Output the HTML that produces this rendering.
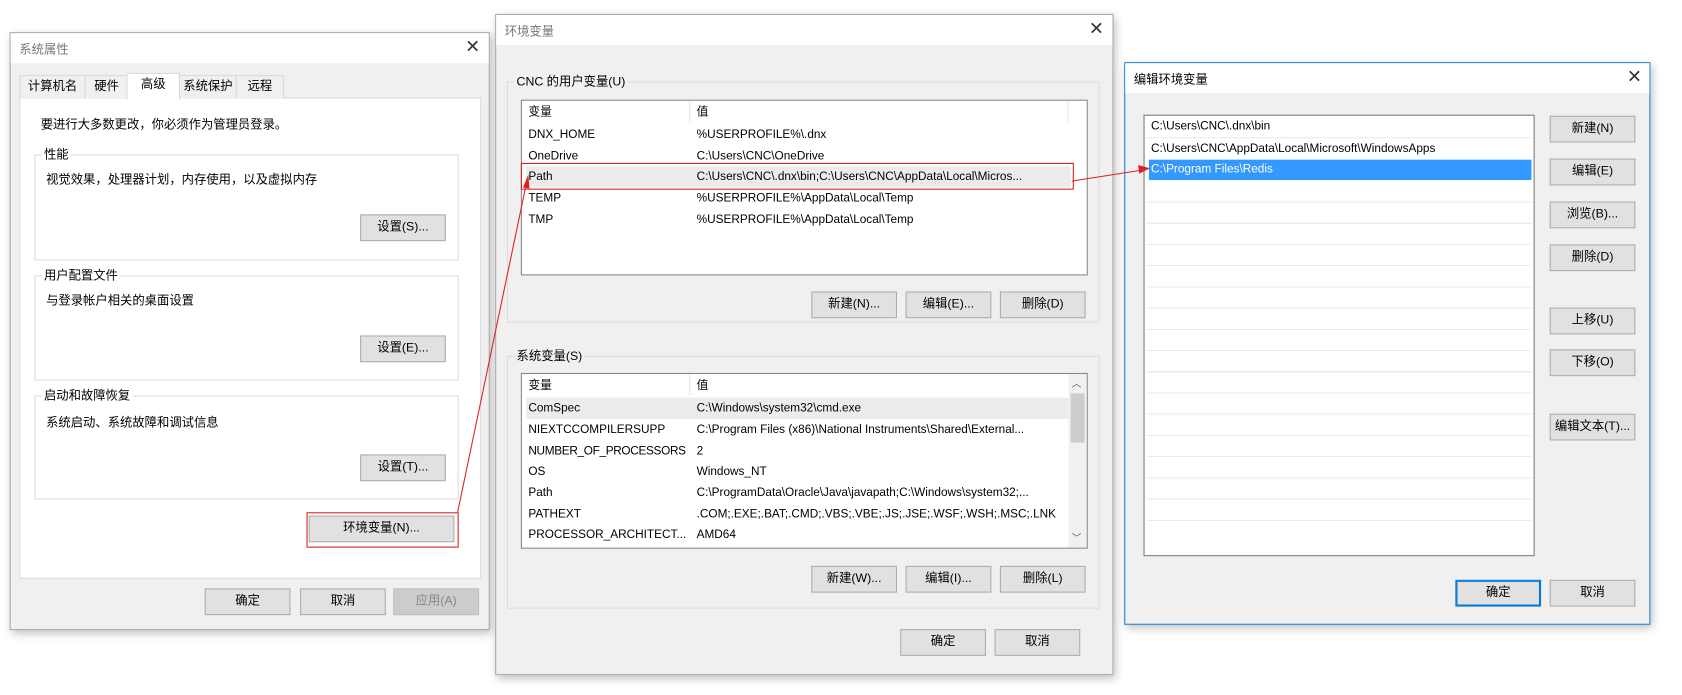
<!DOCTYPE html>
<html><head><meta charset="utf-8"><style>
html,body{margin:0;padding:0;background:#fff;width:1682px;height:695px;overflow:hidden}
#w{position:absolute;left:0;top:0;width:1560px;height:645px;transform:scale(1.0717);transform-origin:0 0;font-family:"Liberation Sans","Noto Sans CJK SC",sans-serif;font-size:11.5px;color:#000}
.a{position:absolute;white-space:nowrap}
.dlg{position:absolute;background:#f0f0f0;border:1px solid #aaa;box-shadow:2px 3px 8px rgba(0,0,0,.25)}
.tb{position:absolute;left:0;right:0;top:0;height:28px;background:#fff}
.tt{position:absolute;left:8px;top:7px;color:#777}
.x{position:absolute;top:3px;font-size:17px;color:#333;font-weight:300}
.btn{position:absolute;height:23px;width:78px;background:#e1e1e1;border:1px solid #adadad;text-align:center;line-height:23px;box-sizing:content-box}
.grp{position:absolute;border:1px solid #dcdcdc}
.gl{position:absolute;top:-9px;left:6px;background:#f0f0f0;padding:0 2px}
.lst{position:absolute;background:#fff;border:1px solid #828790;overflow:hidden}
.r{position:absolute;left:6px;height:20px;line-height:20px}
.lst .r{font-size:11px}
</style></head><body><div id="w">

<!-- dialog 1 -->
<div class="dlg" style="left:9px;top:30px;width:446px;height:556px">
 <div class="tb"><div class="tt">系统属性</div><div class="x" style="left:424px">✕</div></div>
 <div class="a" style="left:8px;top:60px;width:429px;height:447px;background:#fff;border:1px solid #d9d9d9"></div>
 <div class="a" style="left:8px;top:39px;width:60px;height:21px;border:1px solid #d9d9d9;border-bottom:none;background:#f0f0f0;line-height:20px;text-align:center">计算机名</div>
 <div class="a" style="left:69px;top:39px;width:39px;height:21px;border:1px solid #d9d9d9;border-bottom:none;background:#f0f0f0;line-height:20px;text-align:center">硬件</div>
 <div class="a" style="left:108px;top:37px;width:48px;height:24px;border:1px solid #d9d9d9;border-bottom:none;background:#fff;line-height:20px;text-align:center">高级</div>
 <div class="a" style="left:157px;top:39px;width:52px;height:21px;border:1px solid #d9d9d9;border-bottom:none;background:#f0f0f0;line-height:20px;text-align:center">系统保护</div>
 <div class="a" style="left:210px;top:39px;width:43px;height:21px;border:1px solid #d9d9d9;border-bottom:none;background:#f0f0f0;line-height:20px;text-align:center">远程</div>
 <div class="a" style="left:28px;top:77px">要进行大多数更改，你必须作为管理员登录。</div>
 <div class="grp" style="left:22px;top:113px;width:394px;height:97px"><div class="gl" style="background:#fff">性能</div></div>
 <div class="a" style="left:33px;top:128px">视觉效果，处理器计划，内存使用，以及虚拟内存</div>
 <div class="btn" style="left:326px;top:169px">设置(S)...</div>
 <div class="grp" style="left:22px;top:226px;width:394px;height:96px"><div class="gl" style="background:#fff">用户配置文件</div></div>
 <div class="a" style="left:33px;top:241px">与登录帐户相关的桌面设置</div>
 <div class="btn" style="left:326px;top:282px">设置(E)...</div>
 <div class="grp" style="left:22px;top:338px;width:394px;height:95px"><div class="gl" style="background:#fff">启动和故障恢复</div></div>
 <div class="a" style="left:33px;top:355px">系统启动、系统故障和调试信息</div>
 <div class="btn" style="left:326px;top:393px">设置(T)...</div>
 <div class="btn" style="left:278px;top:450px;width:134px">环境变量(N)...</div>
 <div class="a" style="left:276px;top:447px;width:140px;height:31px;border:1px solid #d42020"></div>
 <div class="btn" style="left:181px;top:518px">确定</div>
 <div class="btn" style="left:270px;top:518px">取消</div>
 <div class="btn" style="left:357px;top:518px;background:#ccc;border-color:#bfbfbf;color:#888">应用(A)</div>
</div>

<!-- dialog 2 -->
<div class="dlg" style="left:462px;top:13px;width:575px;height:615px">
 <div class="tb"><div class="tt">环境变量</div><div class="x" style="left:553px">✕</div></div>
 <div class="grp" style="left:10px;top:62px;width:551px;height:223px"><div class="gl">CNC 的用户变量(U)</div></div>
 <div class="lst" style="left:23px;top:79px;width:527px;height:162px">
  <div class="a" style="left:156px;top:0;width:1px;height:20px;background:#e5e5e5"></div>
  <div class="a" style="left:509px;top:0;width:1px;height:20px;background:#e5e5e5"></div>
  <div class="r" style="top:1px">变量</div><div class="r" style="top:1px;left:163px">值</div>
  <div class="a" style="left:4px;top:61px;width:508px;height:20px;background:#ececec"></div>
  <div class="r" style="top:22px">DNX_HOME</div><div class="r" style="top:22px;left:163px">%USERPROFILE%\.dnx</div>
  <div class="r" style="top:42px">OneDrive</div><div class="r" style="top:42px;left:163px">C:\Users\CNC\OneDrive</div>
  <div class="r" style="top:61px">Path</div><div class="r" style="top:61px;left:163px">C:\Users\CNC\.dnx\bin;C:\Users\CNC\AppData\Local\Micros...</div>
  <div class="r" style="top:81px">TEMP</div><div class="r" style="top:81px;left:163px">%USERPROFILE%\AppData\Local\Temp</div>
  <div class="r" style="top:101px">TMP</div><div class="r" style="top:101px;left:163px">%USERPROFILE%\AppData\Local\Temp</div>
 </div>
 <div class="a" style="left:23px;top:138px;width:514px;height:23px;border:1px solid #d42020"></div>
 <div class="btn" style="left:294px;top:258px">新建(N)...</div>
 <div class="btn" style="left:382px;top:258px">编辑(E)...</div>
 <div class="btn" style="left:470px;top:258px">删除(D)</div>
 <div class="grp" style="left:10px;top:318px;width:551px;height:234px"><div class="gl">系统变量(S)</div></div>
 <div class="lst" style="left:23px;top:334px;width:527px;height:162px">
  <div class="a" style="left:156px;top:0;width:1px;height:20px;background:#e5e5e5"></div>
  <div class="r" style="top:1px">变量</div><div class="r" style="top:1px;left:163px">值</div>
  <div class="a" style="left:4px;top:22px;width:506px;height:20px;background:#ececec"></div>
  <div class="r" style="top:22px">ComSpec</div><div class="r" style="top:22px;left:163px">C:\Windows\system32\cmd.exe</div>
  <div class="r" style="top:42px">NIEXTCCOMPILERSUPP</div><div class="r" style="top:42px;left:163px">C:\Program Files (x86)\National Instruments\Shared\External...</div>
  <div class="r" style="top:62px;letter-spacing:-0.3px">NUMBER_OF_PROCESSORS</div><div class="r" style="top:62px;left:163px">2</div>
  <div class="r" style="top:81px">OS</div><div class="r" style="top:81px;left:163px">Windows_NT</div>
  <div class="r" style="top:101px">Path</div><div class="r" style="top:101px;left:163px">C:\ProgramData\Oracle\Java\javapath;C:\Windows\system32;...</div>
  <div class="r" style="top:121px">PATHEXT</div><div class="r" style="top:121px;left:163px">.COM;.EXE;.BAT;.CMD;.VBS;.VBE;.JS;.JSE;.WSF;.WSH;.MSC;.LNK</div>
  <div class="r" style="top:140px">PROCESSOR_ARCHITECT...</div><div class="r" style="top:140px;left:163px">AMD64</div>
  <div class="a" style="left:510px;top:0;width:17px;height:162px;background:#f0f0f0"></div>
  <div class="a" style="left:512px;top:18px;width:13px;height:46px;background:#cdcdcd"></div>
  <div class="a" style="left:513px;top:2px;font-size:9px;color:#555">︿</div>
  <div class="a" style="left:513px;top:146px;font-size:9px;color:#555">﹀</div>
 </div>
 <div class="btn" style="left:294px;top:514px">新建(W)...</div>
 <div class="btn" style="left:382px;top:514px">编辑(I)...</div>
 <div class="btn" style="left:470px;top:514px">删除(L)</div>
 <div class="btn" style="left:377px;top:573px">确定</div>
 <div class="btn" style="left:465px;top:573px">取消</div>
</div>

<!-- dialog 3 -->
<div class="dlg" style="left:1049px;top:58px;width:489px;height:523px;border-color:#1883d7">
 <div class="tb"><div class="tt" style="color:#000">编辑环境变量</div><div class="x" style="left:468px">✕</div></div>
 <div class="lst" style="left:17px;top:48px;width:363px;height:410px;border-color:#7a7a7a">
  <div class="r" style="top:0">C:\Users\CNC\.dnx\bin</div>
  <div class="a" style="left:2px;top:20px;width:359px;height:1px;background:#eaeaea"></div>
  <div class="r" style="top:21px">C:\Users\CNC\AppData\Local\Microsoft\WindowsApps</div>
  <div class="a" style="left:4px;top:41px;width:357px;height:19px;background:#3399ff"></div>
  <div class="r" style="top:40px;color:#fff">C:\Program Files\Redis</div>
  <div class="a" style="left:2px;top:80px;width:359px;height:300px;background:repeating-linear-gradient(#eaeaea 0 1px,transparent 1px 19.8px)"></div>
 </div>
 <div class="btn" style="left:396px;top:49px">新建(N)</div>
 <div class="btn" style="left:396px;top:89px">编辑(E)</div>
 <div class="btn" style="left:396px;top:129px">浏览(B)...</div>
 <div class="btn" style="left:396px;top:169px">删除(D)</div>
 <div class="btn" style="left:396px;top:228px">上移(U)</div>
 <div class="btn" style="left:396px;top:267px">下移(O)</div>
 <div class="btn" style="left:396px;top:327px">编辑文本(T)...</div>
 <div class="btn" style="left:308px;top:482px;border:1px solid #0078d7;box-shadow:inset 0 0 0 1px #0078d7">确定</div>
 <div class="btn" style="left:396px;top:482px">取消</div>
</div>

<svg class="a" style="left:0;top:0" width="1560" height="645">
 <line x1="427" y1="478" x2="491" y2="172" stroke="#e02020" stroke-width="1"/>
 <polygon points="493,163 488,175 494,176" fill="#e02020"/>
 <line x1="1000" y1="169" x2="1064" y2="159" stroke="#e02020" stroke-width="1"/>
 <polygon points="1073,157 1062,154 1063,162" fill="#e02020"/>
</svg>
</div></body></html>
